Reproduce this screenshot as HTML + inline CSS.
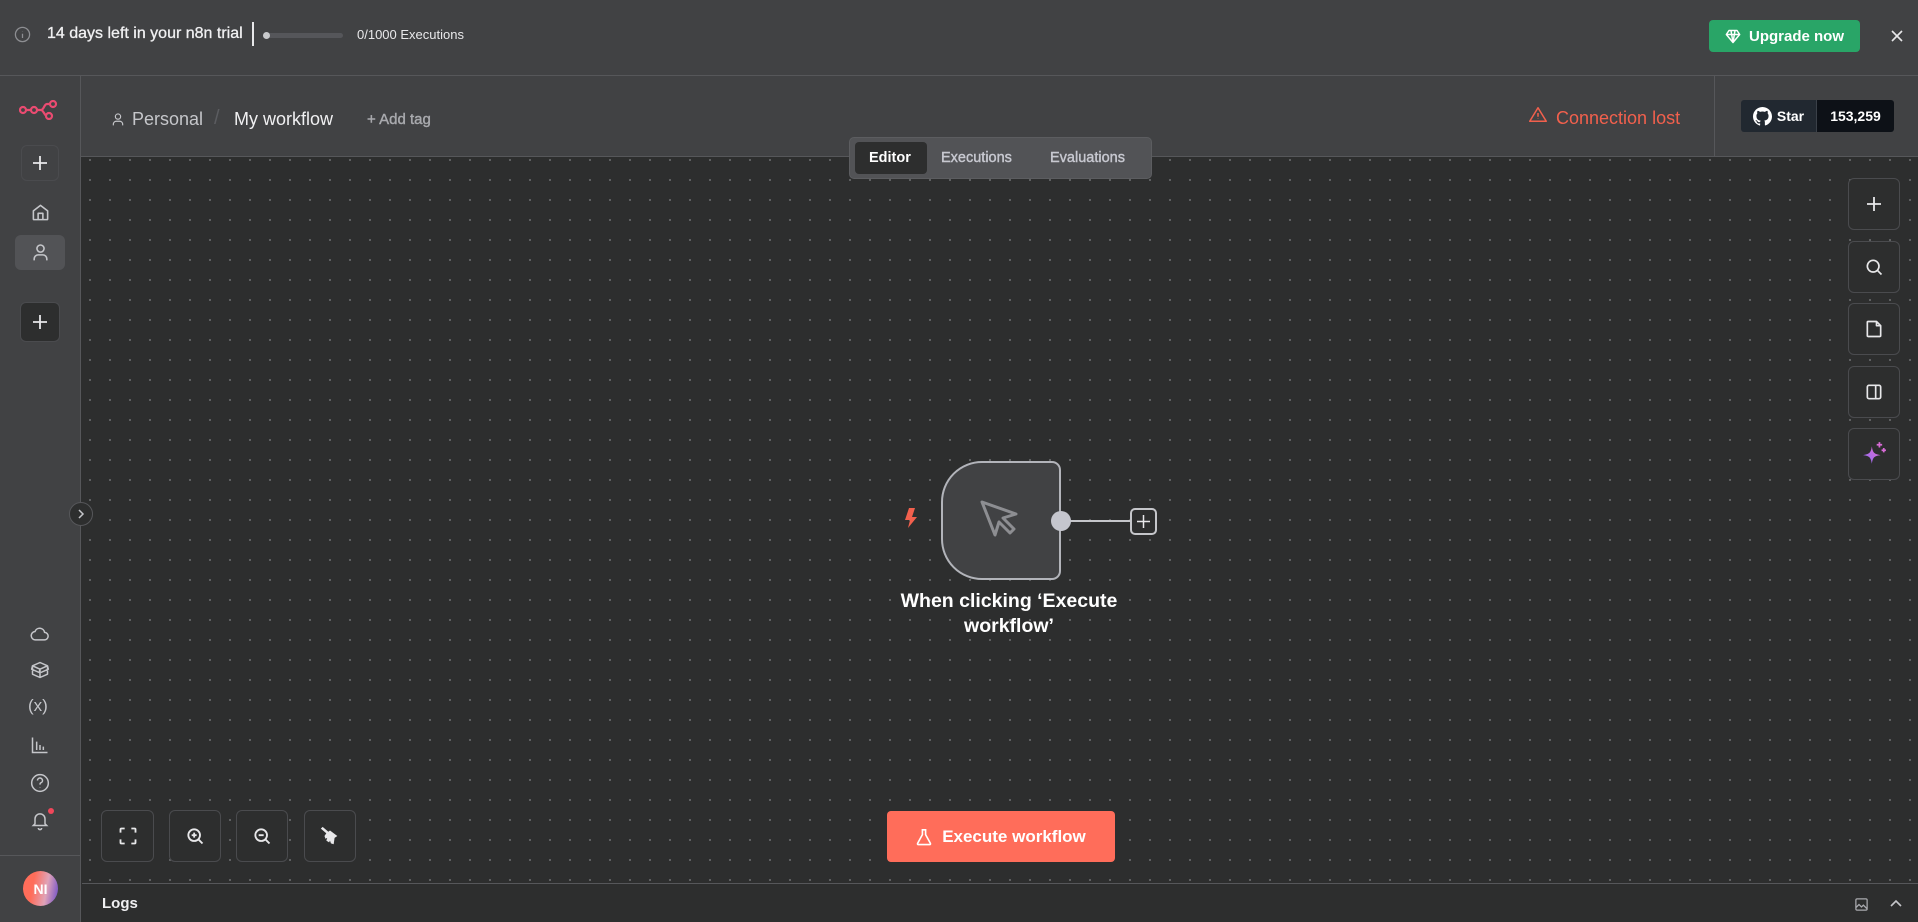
<!DOCTYPE html>
<html><head><meta charset="utf-8"><style>
*{box-sizing:border-box;margin:0;padding:0}
body{width:1918px;height:922px;overflow:hidden;background:#2d2e2e;font-family:"Liberation Sans",sans-serif;color:#e8e8ea;position:relative}
.abs{position:absolute}
#banner{left:0;top:0;width:1918px;height:76px;background:#414244;border-bottom:1px solid #56575a}
#side{left:0;top:76px;width:81px;height:846px;background:#414244;border-right:1px solid #56575a}
#head{left:81px;top:76px;width:1837px;height:81px;background:#414244;border-bottom:1px solid #56575a}
#canvas{left:82px;top:157px;width:1836px;height:726px;background-color:#2d2e2e;background-image:radial-gradient(circle,#6a6b6e 0.9px,transparent 1.1px);background-size:20px 20px;background-position:-2px -7px}
.btn{position:absolute;border:1px solid #4a4b4e;border-radius:6px;background:#2d2e2e;display:flex;align-items:center;justify-content:center}
svg{display:block}
#logs{left:82px;top:883px;width:1836px;height:39px;background:#2d2e2e;border-top:1px solid #56575a}
</style></head><body>
<div id="banner" class="abs">
 <svg class="abs" style="left:14px;top:26px" width="17" height="17" viewBox="0 0 24 24" fill="none" stroke="#8d8e92" stroke-width="1.8"><circle cx="12" cy="12" r="10"/><path d="M12 11v6M12 7.5v.5"/></svg>
 <div class="abs" style="left:47px;top:25px;font-size:16px;color:#f0f0f2;-webkit-text-stroke:0.3px #f0f0f2">14 days left in your n8n trial</div>
 <div class="abs" style="left:252px;top:22px;width:2px;height:24px;background:#e8e8ea"></div>
 <div class="abs" style="left:263px;top:33px;width:80px;height:5px;border-radius:3px;background:#55565a"></div>
 <div class="abs" style="left:263px;top:32px;width:7px;height:7px;border-radius:4px;background:#c8c9cc"></div>
 <div class="abs" style="left:357px;top:27px;font-size:13px;color:#e8e8ea">0/1000 Executions</div>
 <div class="abs" style="left:1709px;top:20px;width:151px;height:32px;background:#29a567;border-radius:4px;display:flex;align-items:center;justify-content:center;gap:8px;font-size:15px;font-weight:bold;color:#fff">
  <svg width="16" height="15" viewBox="0 0 24 22" fill="none" stroke="#fff" stroke-width="2.2" stroke-linejoin="round"><path d="M6 2h12l4 6-10 12L2 8z M2 8h20 M9 2l3 18 3-18"/></svg>Upgrade now</div>
 <svg class="abs" style="left:1891px;top:30px" width="12" height="12" viewBox="0 0 12 12" stroke="#e8e8ea" stroke-width="1.6"><path d="M1 1l10 10M11 1L1 11"/></svg>
</div>

<div id="side" class="abs">
 <svg class="abs" style="left:19px;top:24px" width="40" height="20" viewBox="0 0 40 20" fill="none" stroke="#ea4b71" stroke-width="2.2"><circle cx="4" cy="10" r="3"/><circle cx="15" cy="10" r="3"/><circle cx="34" cy="4" r="3"/><circle cx="30" cy="16" r="3"/><path d="M7 10h5M18 10h4c3 0 3-6 6-6h3M22 10c2 0 3 4 5 5.5"/></svg>
 <div class="btn" style="left:21px;top:69px;width:38px;height:36px;background:#414244"><svg width="16" height="16" stroke="#e8e8ea" stroke-width="1.8"><path d="M8 1v14M1 8h14"/></svg></div>
 <svg class="abs" style="left:31px;top:127px" width="19" height="19" viewBox="0 0 24 24" fill="none" stroke="#c5c6ca" stroke-width="2" stroke-linejoin="round"><path d="M3 10l9-7 9 7v10a1 1 0 0 1-1 1H4a1 1 0 0 1-1-1z M9 21v-8h6v8"/></svg>
 <div class="abs" style="left:15px;top:159px;width:50px;height:35px;background:#525356;border-radius:6px"></div>
 <svg class="abs" style="left:31px;top:167px" width="19" height="19" viewBox="0 0 24 24" fill="none" stroke="#c5c6ca" stroke-width="2"><circle cx="12" cy="7" r="4.5"/><path d="M4 22v-2a5 5 0 0 1 5-5h6a5 5 0 0 1 5 5v2"/></svg>
 <div class="btn" style="left:20px;top:226px;width:40px;height:40px"><svg width="16" height="16" stroke="#e8e8ea" stroke-width="1.8"><path d="M8 1v14M1 8h14"/></svg></div>
 <svg class="abs" style="left:30px;top:548px" width="20" height="20" viewBox="0 0 24 24" fill="none" stroke="#c5c6ca" stroke-width="1.8"><path d="M7 19h10a4.5 4.5 0 0 0 .5-9A6 6 0 0 0 6 9a5 5 0 0 0 1 10z"/></svg>
 <svg class="abs" style="left:30px;top:584px" width="20" height="20" viewBox="0 0 24 24" fill="none" stroke="#c5c6ca" stroke-width="1.8" stroke-linejoin="round"><path d="M12 3l9 4-9 4-9-4z M3 7v10l9 4 9-4V7 M12 11v10 M3 7l-1 4 9 4 1-4 M21 7l1 4-9 4"/></svg>
 <div class="abs" style="left:28px;top:620px;font-size:17px;color:#c5c6ca">(x)</div>
 <svg class="abs" style="left:30px;top:659px" width="20" height="20" viewBox="0 0 24 24" fill="none" stroke="#c5c6ca" stroke-width="1.8"><path d="M3 3v18h18 M8 8v10 M12 12v6 M16 14v4"/></svg>
 <svg class="abs" style="left:30px;top:697px" width="20" height="20" viewBox="0 0 24 24" fill="none" stroke="#c5c6ca" stroke-width="1.8"><circle cx="12" cy="12" r="10"/><path d="M9 9a3 3 0 1 1 4 2.8c-1 .4-1 1.2-1 2.2M12 17.5v.5"/></svg>
 <svg class="abs" style="left:30px;top:734px" width="20" height="21" viewBox="0 0 24 24" fill="none" stroke="#c5c6ca" stroke-width="1.8"><path d="M6 16V10a6 6 0 0 1 12 0v6l2 2H4z M10 21a2 2 0 0 0 4 0"/></svg>
 <div class="abs" style="left:48px;top:732px;width:6px;height:6px;border-radius:3px;background:#f0475a"></div>
 <div class="abs" style="left:0;top:779px;width:80px;height:1px;background:#56575a"></div>
 <div class="abs" style="left:23px;top:795px;width:35px;height:35px;border-radius:50%;background:linear-gradient(100deg,#ff6d5a 30%,#e0a3b8 65%,#6a4bc9);display:flex;align-items:center;justify-content:center;font-size:14px;font-weight:bold;color:#fff">NI</div>
</div>

<div id="head" class="abs">
 <svg class="abs" style="left:30px;top:36px" width="14" height="15" viewBox="0 0 24 24" fill="none" stroke="#c5c6ca" stroke-width="2"><circle cx="12" cy="7" r="4.5"/><path d="M4 22v-2a5 5 0 0 1 5-5h6a5 5 0 0 1 5 5v2"/></svg>
 <div class="abs" style="left:51px;top:33px;font-size:18px;color:#c5c6ca">Personal</div>
 <div class="abs" style="left:133px;top:31px;font-size:20px;color:#5b5c60">/</div>
 <div class="abs" style="left:153px;top:33px;font-size:18px;color:#f0f0f2">My workflow</div>
 <div class="abs" style="left:286px;top:35px;font-size:15px;color:#a9aaae;-webkit-text-stroke:0.4px #a9aaae">+ Add tag</div>
 <svg class="abs" style="left:1448px;top:30px" width="18" height="17" viewBox="0 0 24 22" fill="none" stroke="#f2604d" stroke-width="2" stroke-linejoin="round"><path d="M12 2L1 20h22z M12 9v5 M12 16.5v.5"/></svg>
 <div class="abs" style="left:1475px;top:32px;font-size:18px;color:#f2604d">Connection lost</div>
 <div class="abs" style="left:1633px;top:0;width:1px;height:80px;background:#56575a"></div>
 <div class="abs" style="left:1660px;top:24px;width:153px;height:32px;border-radius:3px;overflow:hidden;display:flex;font-size:14px;font-weight:bold;color:#fff">
  <div style="width:76px;background:#212830;display:flex;align-items:center;justify-content:center;gap:5px;border-right:1px solid #3a4048"><svg width="19" height="19" viewBox="0 0 16 16" fill="#fff"><path d="M8 0C3.6 0 0 3.6 0 8c0 3.5 2.3 6.5 5.5 7.6.4.1.5-.2.5-.4v-1.4c-2.2.5-2.7-1-2.7-1-.4-.9-.9-1.2-.9-1.2-.7-.5.1-.5.1-.5.8.1 1.2.8 1.2.8.7 1.3 1.9.9 2.3.7.1-.5.3-.9.5-1.1-1.8-.2-3.6-.9-3.6-4 0-.9.3-1.6.8-2.1-.1-.2-.4-1 .1-2.1 0 0 .7-.2 2.2.8.6-.2 1.3-.3 2-.3s1.4.1 2 .3c1.5-1 2.2-.8 2.2-.8.4 1.1.2 1.9.1 2.1.5.6.8 1.3.8 2.1 0 3.1-1.9 3.7-3.6 3.9.3.3.5.8.5 1.5v2.2c0 .2.1.5.6.4C13.7 14.5 16 11.5 16 8c0-4.4-3.6-8-8-8z"/></svg>Star</div>
  <div style="flex:1;background:#0d1117;display:flex;align-items:center;justify-content:center">153,259</div>
 </div>
</div>

<div id="canvas" class="abs"></div>

<div class="abs" style="left:849px;top:137px;width:303px;height:42px;background:#525356;border-radius:5px;border:1px solid #5c5d60"></div>
<div class="abs" style="left:855px;top:142px;width:72px;height:32px;background:#2d2e2e;border-radius:4px"></div>
<div class="abs" style="left:869px;top:150px;font-size:14.5px;font-weight:bold;color:#fff">Editor</div>
<div class="abs" style="left:941px;top:150px;font-size:14.5px;color:#c7c8d0;-webkit-text-stroke:0.4px #c7c8d0">Executions</div>
<div class="abs" style="left:1050px;top:150px;font-size:14.5px;color:#c7c8d0;-webkit-text-stroke:0.4px #c7c8d0">Evaluations</div>

<div class="btn" style="left:1848px;top:178px;width:52px;height:52px"><svg width="16" height="16" stroke="#e8e8ea" stroke-width="1.8"><path d="M8 1v14M1 8h14"/></svg></div>
<div class="btn" style="left:1848px;top:241px;width:52px;height:52px"><svg width="20" height="20" viewBox="0 0 24 24" fill="none" stroke="#e8e8ea" stroke-width="2"><circle cx="11" cy="11" r="7"/><path d="M16 16l5 5"/></svg></div>
<div class="btn" style="left:1848px;top:303px;width:52px;height:52px"><svg width="20" height="20" viewBox="0 0 24 24" fill="none" stroke="#e8e8ea" stroke-width="2" stroke-linejoin="round"><path d="M5 3h10l5 5v12a1 1 0 0 1-1 1H5a1 1 0 0 1-1-1V4a1 1 0 0 1 1-1z M15 3v5h5"/></svg></div>
<div class="btn" style="left:1848px;top:366px;width:52px;height:52px"><svg width="20" height="20" viewBox="0 0 24 24" fill="none" stroke="#e8e8ea" stroke-width="2"><rect x="4" y="4" width="16" height="16" rx="2"/><path d="M14 4v16"/></svg></div>
<div class="btn" style="left:1848px;top:428px;width:52px;height:52px"><svg width="26" height="26" viewBox="0 0 24 24"><defs><linearGradient id="g" x1="0" y1="1" x2="1" y2="0"><stop offset="0" stop-color="#8b6cf5"/><stop offset="1" stop-color="#e46bd0"/></linearGradient></defs><path fill="url(#g)" d="M10 5c1 6 2 7 8 8-6 1-7 2-8 8-1-6-2-7-8-8 6-1 7-2 8-8z"/><path stroke="#d86bd6" stroke-width="1.6" d="M17 1v5M14.5 3.5h5M21 6.5v4M19 8.5h4"/></svg></div>

<div class="abs" style="left:69px;top:502px;width:24px;height:24px;border-radius:50%;background:#2d2e2e;border:1px solid #56575a;display:flex;align-items:center;justify-content:center"><svg width="8" height="10" fill="none" stroke="#c5c6ca" stroke-width="1.5"><path d="M2 1l4 4-4 4"/></svg></div>

<!-- node -->
<svg class="abs" style="left:900px;top:455px" width="265" height="135" viewBox="900 455 265 135">
 <path d="M909 511l-4 12h5l-2 8 9-11h-5l3-9z" fill="#f2604d" transform="translate(0,-3)"/>
 <path d="M982 462h70a8 8 0 0 1 8 8v101a8 8 0 0 1-8 8h-70a40 40 0 0 1-40-40v-37a40 40 0 0 1 40-40z" fill="#414244" stroke="#b2b4ba" stroke-width="2"/>
 <path d="M982 503l34 12-13 4 11 11-4 4-11-11-4 13z" fill="none" stroke="#8d8e92" stroke-width="3" stroke-linejoin="round" transform="translate(0,-1)"/>
 <path d="M1061 521h70" stroke="#c5c6ca" stroke-width="2"/>
 <circle cx="1061" cy="521" r="10" fill="#c5c6ce"/>
 <rect x="1131" y="509" width="25" height="25" rx="4" fill="#2d2e2e" stroke="#c5c6ca" stroke-width="2"/>
 <path d="M1143.5 515v13M1137 521.5h13" stroke="#e8e8ea" stroke-width="1.5"/>
</svg>
<div class="abs" style="left:879px;top:589px;width:260px;text-align:center;font-size:19.5px;font-weight:bold;color:#fff;line-height:25px">When clicking ‘Execute workflow’</div>

<div class="btn" style="left:101px;top:810px;width:53px;height:52px"><svg width="20" height="20" viewBox="0 0 24 24" fill="none" stroke="#e8e8ea" stroke-width="2.2"><path d="M3 8V4a1 1 0 0 1 1-1h4M16 3h4a1 1 0 0 1 1 1v4M21 16v4a1 1 0 0 1-1 1h-4M8 21H4a1 1 0 0 1-1-1v-4"/></svg></div>
<div class="btn" style="left:169px;top:810px;width:52px;height:52px"><svg width="20" height="20" viewBox="0 0 24 24" fill="none" stroke="#e8e8ea" stroke-width="2.2"><circle cx="11" cy="11" r="7"/><path d="M16 16l5 5M11 8v6M8 11h6"/></svg></div>
<div class="btn" style="left:236px;top:810px;width:52px;height:52px"><svg width="20" height="20" viewBox="0 0 24 24" fill="none" stroke="#e8e8ea" stroke-width="2.2"><circle cx="11" cy="11" r="7"/><path d="M16 16l5 5M8 11h6"/></svg></div>
<div class="btn" style="left:304px;top:810px;width:52px;height:52px"><svg width="22" height="22" viewBox="0 0 24 24" fill="#e8e8ea"><path d="M2 4l2-2 7 6-2 2z M8 9l4-3 8 6-3 2-1 7-3-1-1-3-1 2-3-2 1-3-2 1-1-3z"/></svg></div>

<div class="abs" style="left:887px;top:811px;width:228px;height:51px;background:#ff6d5a;border-radius:4px;display:flex;align-items:center;justify-content:center;gap:10px;font-size:17px;font-weight:bold;color:#fff">
 <svg width="16" height="18" viewBox="0 0 20 22" fill="none" stroke="#fff" stroke-width="2" stroke-linejoin="round"><path d="M7 2h6M8 2v6L2 19a1 1 0 0 0 1 1.5h14a1 1 0 0 0 1-1.5L12 8V2"/></svg>Execute workflow</div>

<div id="logs" class="abs">
 <div class="abs" style="left:20px;top:11px;font-size:15px;font-weight:bold;color:#f0f0f2">Logs</div>
 <svg class="abs" style="left:1772px;top:13px" width="15" height="15" viewBox="0 0 24 24" fill="none" stroke="#a9aaae" stroke-width="2"><rect x="3" y="3" width="18" height="18" rx="2"/><path d="M3 17l5-5 4 4 3-3 6 6"/></svg>
 <svg class="abs" style="left:1808px;top:15px" width="12" height="9" fill="none" stroke="#c5c6ca" stroke-width="1.6"><path d="M1 7l5-5 5 5"/></svg>
</div>
</body></html>
